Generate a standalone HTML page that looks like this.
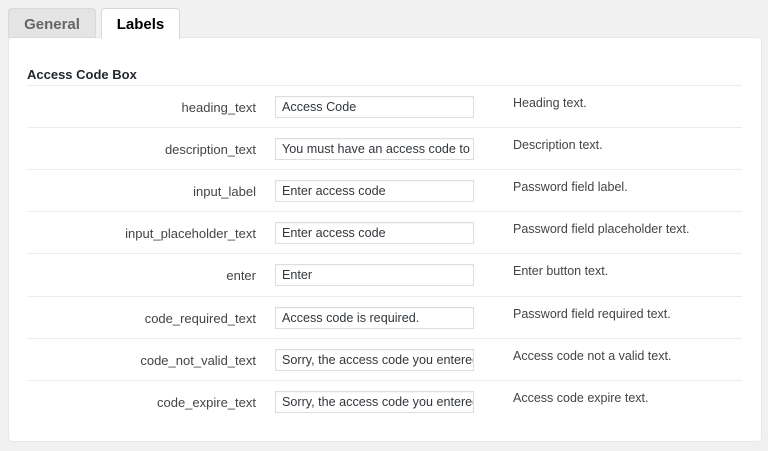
<!DOCTYPE html>
<html><head><style>
body{margin:0;width:768px;height:451px;background:#f1f1f1;font-family:"Liberation Sans",sans-serif;position:relative;overflow:hidden}
.tab{position:absolute;top:8px;height:30px;border:1px solid #d8d8d8;border-bottom:none;border-radius:4px 4px 0 0;font-weight:bold;font-size:15px;line-height:31px;text-align:center;box-sizing:border-box}
.panel{position:absolute;left:9px;top:38px;width:752px;height:403px;background:#fff;border-radius:3px;box-shadow:0 0 1px rgba(0,0,0,.25)}
h3{position:absolute;left:27px;top:67px;margin:0;font-size:13px;font-weight:bold;color:#23282d}
.sep{position:absolute;left:27px;width:715px;height:1px;background:#ececec}
.lab{position:absolute;right:512px;font-size:13px;color:#444}
.inp{position:absolute;left:275px;width:199px;height:22px;box-sizing:border-box;border:1px solid #ddd;font-size:12.6px;color:#32373c;padding-left:6px;line-height:21px;white-space:nowrap;overflow:hidden;box-shadow:inset 0 1px 1px rgba(0,0,0,.04)}
.desc{position:absolute;left:513px;font-size:12.5px;color:#444}
</style></head><body>
<div class="tab" style="left:8px;width:88px;background:#e4e4e4;color:#666">General</div>
<div class="panel"></div>
<div class="tab" style="left:101px;width:79px;height:31px;background:#fff;color:#000;z-index:2">Labels</div>
<h3>Access Code Box</h3>
<div class="sep" style="top:85px"></div>
<div class="lab" style="top:100px">heading_text</div><div class="inp" style="top:96px">Access Code</div><div class="desc" style="top:96px">Heading text.</div>
<div class="sep" style="top:127px"></div>
<div class="lab" style="top:142px">description_text</div><div class="inp" style="top:138px">You must have an access code to</div><div class="desc" style="top:138px">Description text.</div>
<div class="sep" style="top:169px"></div>
<div class="lab" style="top:184px">input_label</div><div class="inp" style="top:180px">Enter access code</div><div class="desc" style="top:180px">Password field label.</div>
<div class="sep" style="top:211px"></div>
<div class="lab" style="top:226px">input_placeholder_text</div><div class="inp" style="top:222px">Enter access code</div><div class="desc" style="top:222px">Password field placeholder text.</div>
<div class="sep" style="top:253px"></div>
<div class="lab" style="top:268px">enter</div><div class="inp" style="top:264px">Enter</div><div class="desc" style="top:264px">Enter button text.</div>
<div class="sep" style="top:296px"></div>
<div class="lab" style="top:311px">code_required_text</div><div class="inp" style="top:307px">Access code is required.</div><div class="desc" style="top:307px">Password field required text.</div>
<div class="sep" style="top:338px"></div>
<div class="lab" style="top:353px">code_not_valid_text</div><div class="inp" style="top:349px">Sorry, the access code you entered</div><div class="desc" style="top:349px">Access code not a valid text.</div>
<div class="sep" style="top:380px"></div>
<div class="lab" style="top:395px">code_expire_text</div><div class="inp" style="top:391px">Sorry, the access code you entered</div><div class="desc" style="top:391px">Access code expire text.</div>
</body></html>
